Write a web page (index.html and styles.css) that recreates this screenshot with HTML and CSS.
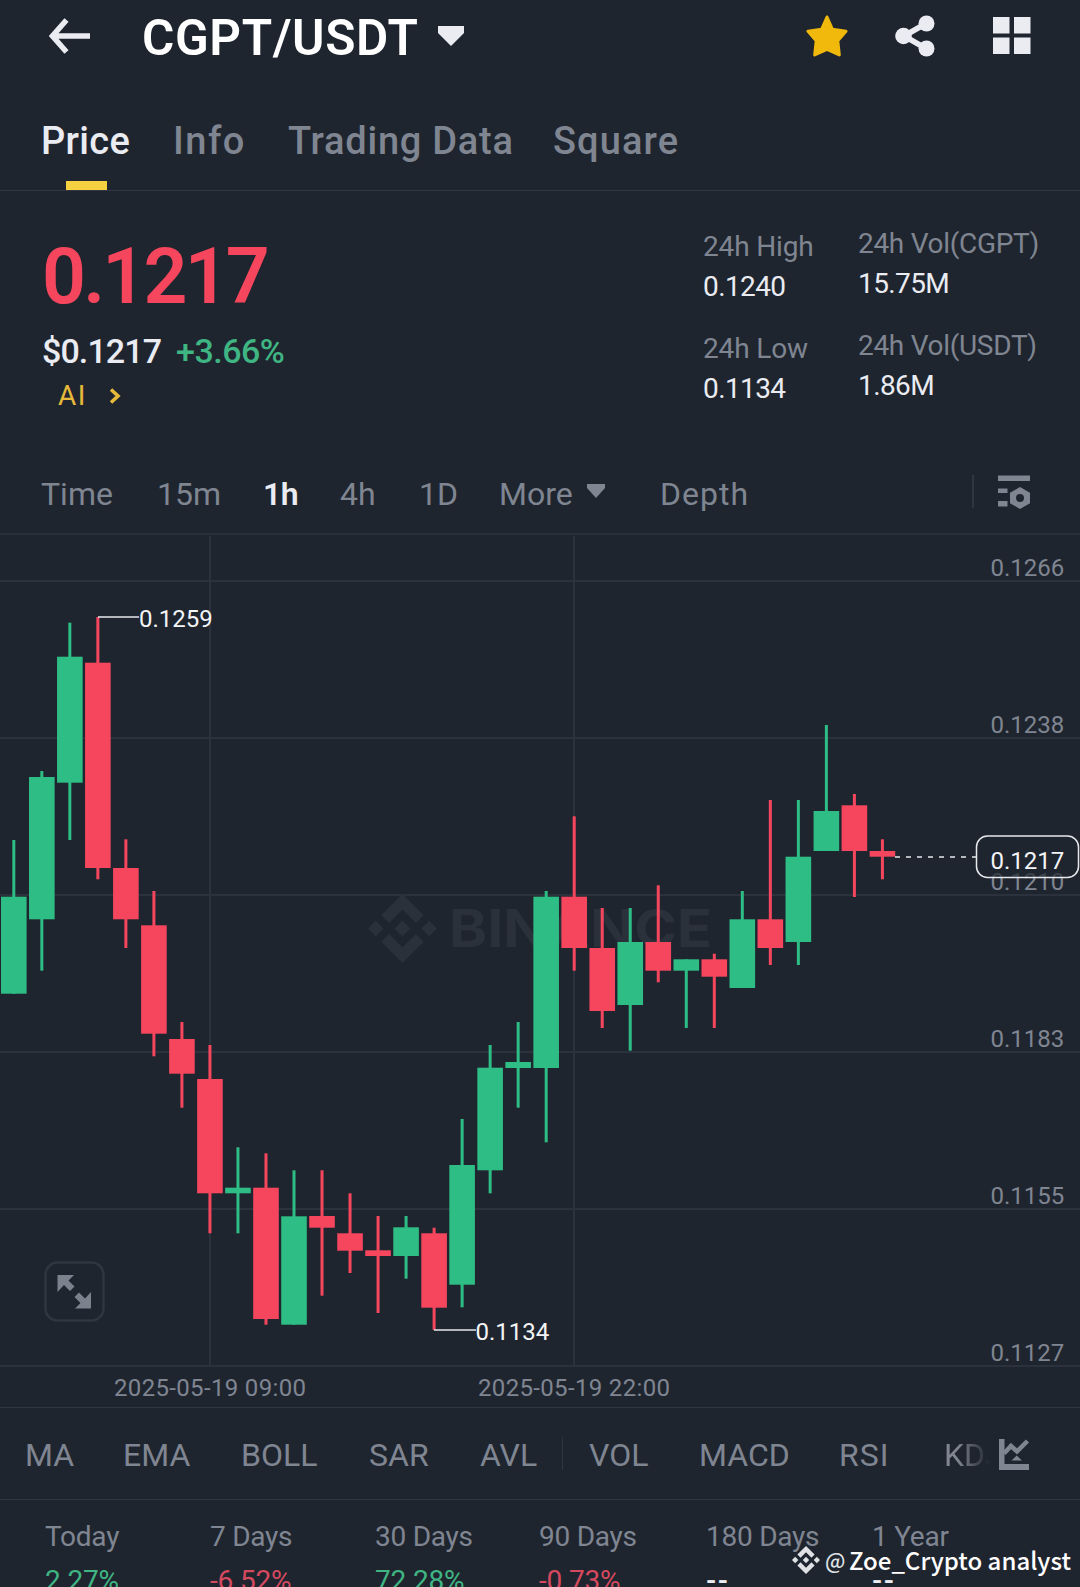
FILE: index.html
```html
<!DOCTYPE html>
<html lang="en">
<head>
<meta charset="utf-8">
<title>CGPT/USDT</title>
<link rel="stylesheet" href="styles.css">
</head>
<body>
<svg class="defs" width="0" height="0"><defs>
<symbol id="logo" viewBox="0 0 126.6 126.6"><path d="M38.7 53.2 63.3 28.6 87.9 53.2 102.2 38.9 63.3 0 24.4 38.9zM0 63.3 14.3 49 28.6 63.3 14.3 77.6zM38.7 73.4 63.3 98 87.9 73.4 102.2 87.7 63.3 126.6 24.4 87.7zM98 63.3 112.3 49 126.6 63.3 112.3 77.6zM77.8 63.3 63.3 48.8 48.8 63.3 63.3 77.8z"/></symbol>
</defs></svg>
<main class="screen">
<header class="header">
<svg class="back" width="42" height="36" viewBox="0 0 42 36"><path d="M41 18H4M17.500 2 3.500 18l14 16" fill="none" stroke="currentColor" stroke-width="5.500"/></svg>
<h1 class="pair">CGPT/USDT</h1>
<svg class="pair-caret" width="26" height="20" viewBox="0 0 26 20"><path d="M0 0h26v7L13 20 0 7z" fill="currentColor"/></svg>
<svg class="star" width="42" height="42" viewBox="0 0 42 42"><path d="M21 2 26.300 14.200 40 16.200 31.800 25.800 33.300 40 21 34.500 8.700 40 10.200 25.800 2 16.200 15.700 14.200z" fill="currentColor" stroke="currentColor" stroke-width="3" stroke-linejoin="round"/></svg>
<svg class="share" width="40" height="42" viewBox="0 0 40 42"><g fill="currentColor"><circle cx="31.500" cy="8.500" r="8"/><circle cx="8.500" cy="21" r="8.300"/><circle cx="31.500" cy="33.500" r="8"/></g><path d="M31 8.500 9 21l22 12.500" fill="none" stroke="currentColor" stroke-width="5.500"/></svg>
<svg class="grid-icon" width="38" height="38" viewBox="0 0 38 38"><path d="M0 0h16.500v16.500H0zM21 0h16.500v16.500H21zM0 20.500h16.500V37H0zM21 20.500h16.500V37H21z" fill="currentColor"/></svg>
</header>
<nav class="tabs"><span class="tab tab-price active">Price</span><span class="tab tab-info">Info</span><span class="tab tab-data">Trading Data</span><span class="tab tab-square">Square</span></nav>
<section class="summary">
<div class="quote">
<div class="last-price">0.1217</div>
<div class="fiat"><span class="fiat-value">$0.1217</span><span class="change up">+3.66%</span></div>
<div class="tag"><span>AI</span><svg width="12" height="16" viewBox="0 0 12 16"><path d="M2 1.500 9 8l-7 6.500" fill="none" stroke="currentColor" stroke-width="3.600"/></svg></div>
</div>
<dl class="stats stats-range"><dt>24h High</dt><dd>0.1240</dd><dt class="second">24h Low</dt><dd>0.1134</dd></dl>
<dl class="stats stats-volume"><dt>24h Vol(CGPT)</dt><dd>15.75M</dd><dt class="second">24h Vol(USDT)</dt><dd>1.86M</dd></dl>
</section>
<nav class="intervals">
<span>Time</span><span>15m</span><span class="active">1h</span><span>4h</span><span>1D</span>
<span class="more">More<svg width="18" height="14" viewBox="0 0 18 14"><path d="M0 0h18v4L9 14 0 4z" fill="currentColor"/></svg></span>
<span class="depth">Depth</span>
<i class="rule"></i>
<svg class="settings" width="33" height="34" viewBox="0 0 33 34"><path d="M0 .5h32V6H0zM0 13.500h9.500V18H0zM0 26h9.500v5.500H0z" fill="currentColor"/><path d="M22 12l10 5.700v10.600L22 34l-10-5.700V17.700z" fill="currentColor"/><circle cx="22" cy="23" r="4" fill="#1f252f"/></svg>
</nav>
<svg class="chart" width="1080" height="872" viewBox="0 535 1080 872">
<path class="gridline" d="M0 581h1080M0 738h1080M0 895h1080M0 1052h1080M0 1209h1080M0 1366h1080M210 536v830M574 536v830"/>
<g class="brand"><use href="#logo" x="368" y="894" width="69" height="69"/><text x="449" y="947" textLength="263" lengthAdjust="spacingAndGlyphs">BINANCE</text></g>
<g class="axis"><text x="990.500" y="576">0.1266</text><text x="990.500" y="733">0.1238</text><text x="990.500" y="890">0.1210</text><text x="990.500" y="1047">0.1183</text><text x="990.500" y="1204">0.1155</text><text x="990.500" y="1361">0.1127</text><text x="114" y="1396" textLength="192">2025-05-19 09:00</text><text x="478" y="1396" textLength="192">2025-05-19 22:00</text></g>
<g id="candles"></g>
<path class="leader" d="M98 617h41M434 1330h42"/>
<g class="marks"><text x="139" y="627">0.1259</text><text x="475.500" y="1340">0.1134</text></g>
<path class="price-line" d="M895 857h81"/>
<rect class="price-box" x="976.500" y="836" width="102" height="41.500" rx="11"/>
<g class="marks"><text x="990.500" y="869">0.1217</text></g>
<rect class="expand-box" x="45.500" y="1262.500" width="58" height="58" rx="12"/>
<path class="expand-icon" d="M57.500 1275H74l-5.500 5.500 6 6-4.500 4.500-6-6-6.500 7zM91 1308.500H75l5.500-5.500-6-6 4.500-4.500 6 6 6-6.500z"/>
</svg>
<nav class="indicators">
<div class="indicator-list"><span>MA</span><span>EMA</span><span>BOLL</span><span>SAR</span><span>AVL</span><i class="rule"></i><span>VOL</span><span>MACD</span><span class="rsi">RSI</span><span class="fading">KDJ</span></div>
<svg width="31" height="31" viewBox="0 0 31 31"><path d="M0 0h5.500v25H30v6H0zM12.500 21.500l5.200-5 5.200 5z" fill="currentColor"/><path d="M5 14.500l7-7.500 6 5.500L28.500 2" fill="none" stroke="currentColor" stroke-width="4.500"/></svg>
</nav>
<section class="performance">
<div><span>Today</span><b class="up">2.27%</b></div><div><span>7 Days</span><b class="down">-6.52%</b></div><div><span>30 Days</span><b class="up">72.28%</b></div><div><span>90 Days</span><b class="down">-0.73%</b></div><div><span>180 Days</span><b class="empty">--</b></div><div><span>1 Year</span><b class="empty">--</b></div>
</section>
<div class="credit"><svg width="28" height="28"><use href="#logo" width="28" height="28"/></svg><span class="at">@</span><span class="author">Zoe_Crypto analyst</span></div>
</main>
<script src="chart.js"></script>
</body>
</html>
```
FILE: chart.js
```js
// Each candle: direction, high, body top, body bottom, low (chart y coordinates).
const candles = [
  ['g', 840, 896.7, 993.7, 993.7], ['g', 771, 777, 919.3, 970.7],
  ['g', 622.7, 656.7, 782.7, 840], ['r', 617, 662.7, 868, 879.3],
  ['r', 839.3, 868, 919.3, 948], ['r', 891, 925.3, 1033.7, 1056.3],
  ['r', 1022, 1039, 1073.7, 1107.7], ['r', 1045, 1079, 1193.3, 1233.3],
  ['g', 1147.3, 1187.7, 1193.3, 1233.3], ['r', 1153.3, 1187.7, 1319, 1324.7],
  ['g', 1170.3, 1216.3, 1324.7, 1324.7], ['r', 1170.3, 1216, 1227.7, 1295.7],
  ['r', 1193.3, 1233.3, 1250.7, 1273], ['r', 1216, 1250.3, 1256, 1313],
  ['g', 1216, 1227.3, 1256, 1278.7], ['r', 1227.7, 1233.3, 1307.7, 1330],
  ['g', 1119, 1165, 1284.7, 1307.3], ['g', 1045, 1067.7, 1170.3, 1193.3],
  ['g', 1022, 1062, 1068, 1107.7], ['g', 891, 896.7, 1068, 1142.3],
  ['r', 816.3, 896.7, 948, 970.7], ['r', 908, 948, 1011, 1028],
  ['g', 908, 942, 1005, 1050.7], ['r', 885.3, 942, 970.7, 982.3],
  ['g', 959.3, 959.3, 970.7, 1028], ['r', 953.7, 959.3, 976.7, 1028],
  ['g', 891, 919.3, 988, 988], ['r', 800, 919.3, 948, 965],
  ['g', 800, 856.7, 942, 965], ['g', 725, 811, 851, 851],
  ['r', 794, 805.3, 851, 897], ['r', 839.3, 851, 856.7, 879.3]
];
const layer = document.getElementById('candles');
function addRect(cls, x, y, width, height) {
  const rect = document.createElementNS('http://www.w3.org/2000/svg', 'rect');
  rect.setAttribute('class', cls);
  rect.setAttribute('x', x);
  rect.setAttribute('y', y);
  rect.setAttribute('width', width);
  rect.setAttribute('height', height);
  layer.appendChild(rect);
}
candles.forEach(([dir, high, top, bottom, low], i) => {
  const center = 13.8 + 28.02 * i;
  addRect('wick-' + dir, center - 1.5, high, 3, low - high);
  addRect('body-' + dir, center - 12.8, top, 25.6, bottom - top);
});
```
FILE: styles.css
```css
* { box-sizing: border-box; }
body { margin: 0; background: #1f252f; color: #eaecf2; font-family: Roboto, "Liberation Sans", sans-serif; }
.defs { display: block; }
.screen { position: relative; width: 1080px; height: 1587px; overflow: hidden; display: flex; flex-direction: column; }
.header { height: 100px; padding: 0 49px 28px 49px; display: flex; align-items: center; flex: none; }
.pair { margin: 4px 0 0 51px; width: 276px; font-size: 49.5px; line-height: 72px; font-weight: 600; letter-spacing: .6px; color: #fff; white-space: nowrap; }
.pair-caret { margin-left: 20px; }
.star { margin-left: auto; color: #f0b90b; }
.share { margin-left: 47px; }
.grid-icon { margin-left: 58px; }
.tabs { height: 91px; flex: none; padding: 21px 0 0 41px; border-bottom: 1px solid #303742; display: grid; grid-template-columns: 132px 115px 265px auto; font-size: 38px; font-weight: 500; line-height: 40px; color: #7f8591; white-space: nowrap; }
.tab.active { position: relative; color: #eaecf2; letter-spacing: .3px; }
.tab.active::after { content: ""; position: absolute; left: 25px; bottom: 0; width: 41px; height: 9px; background: #f5d142; }
.tab-info { letter-spacing: 1.5px; }
.tab-data { letter-spacing: .75px; }
.tab-square { letter-spacing: 1.1px; }
.summary { height: 263px; flex: none; padding: 46px 0 0 42px; display: flex; }
.quote { width: 661px; }
.last-price { font-size: 77px; line-height: 80px; font-weight: 600; color: #f6465d; letter-spacing: -2.8px; }
.fiat { margin-top: 14px; display: flex; font-size: 34px; line-height: 40px; font-weight: 500; }
.fiat-value { width: 134px; letter-spacing: -.9px; }
.change { letter-spacing: -.5px; }
.up { color: #3fb583; }
.down { color: #d5495f; }
.tag { margin: 10px 0 0 16px; display: flex; align-items: center; gap: 22px; font-size: 28px; line-height: 30px; color: #e6b93a; letter-spacing: 1.5px; }
.stats { margin: -10px 0 0; width: 155px; font-size: 28px; line-height: 40px; white-space: nowrap; letter-spacing: -.15px; }
.stats-volume { margin-top: -13px; width: auto; letter-spacing: -.3px; }
.stats dt { color: #7f8591; }
.stats dd { margin: 0; letter-spacing: -.6px; }
.stats .second { margin-top: 22px; }
.intervals { height: 81px; flex: none; padding-left: 41px; border-bottom: 2px solid #2a303a; display: grid; grid-template-columns: 116px 106px 77px 79px 80px 161px 312px 26px auto; align-items: center; font-size: 32px; line-height: 40px; color: #7f8591; }
.intervals .active { color: #eaecf2; font-weight: 600; letter-spacing: -.5px; }
.intervals .rule, .settings { margin-bottom: 4px; }
.depth { letter-spacing: 1px; }
.more svg { margin-left: 14px; vertical-align: 7px; }
.rule { width: 2px; height: 33px; background: #303640; }
.chart { display: block; flex: none; }
.gridline { fill: none; stroke: #2c323d; stroke-width: 2; }
.brand { fill: #2b313b; }
.brand text { font: 700 52px Inter, sans-serif; }
.axis { font-size: 24px; fill: #7f8591; }
.marks { font-size: 24px; fill: #f3f4f6; }
.leader { fill: none; stroke: #e6e8ec; stroke-width: 1.5; }
.wick-g, .body-g { fill: #2ebd85; }
.wick-r, .body-r { fill: #f6465d; }
.price-line { stroke: #e6e8ec; stroke-width: 1.5; stroke-dasharray: 5 6; }
.price-box { fill: #1f252f; fill-opacity: .7; stroke: #e6e8ec; stroke-width: 1.5; }
.expand-box { fill: none; stroke: #2f3641; stroke-width: 2.5; }
.expand-icon { fill: #7b818d; }
.indicators { height: 93px; flex: none; border: solid #303742; border-width: 1px 0; display: flex; align-items: center; padding: 3px 0 0 25px; color: #7f8591; }
.indicators svg { margin-bottom: 2px; }
.indicator-list { width: 974px; display: grid; grid-template-columns: 98px 118px 128px 111px 82px 27px 110px 140px 105px auto; align-items: center; font-size: 32px; line-height: 40px; }
.indicators .rule { width: 1px; margin-bottom: 4px; }
.rsi { letter-spacing: 1px; }
.fading { width: 46px; overflow: hidden; -webkit-mask-image: linear-gradient(90deg, #000 30%, transparent 100%); mask-image: linear-gradient(90deg, #000 30%, transparent 100%); }
.performance { flex: none; padding: 15px 0 0 45px; display: grid; grid-template-columns: 165px 165px 164px 167px 166px auto; font-size: 28px; line-height: 44px; white-space: nowrap; letter-spacing: -.25px; }
.performance span, .performance b { display: block; }
.performance span { color: #7f8591; }
.performance b { font-weight: 400; }
.performance .empty { font-weight: 600; letter-spacing: 1.5px; }
.credit { position: absolute; left: 792px; top: 1541px; display: flex; align-items: center; font: 500 24px/38px "Noto Sans CJK SC", sans-serif; color: #fff; white-space: nowrap; }
.credit svg { fill: #dfe1e5; }
.at { width: 24px; margin-left: 5px; font-size: 21px; color: #dfe1e5; }
```
